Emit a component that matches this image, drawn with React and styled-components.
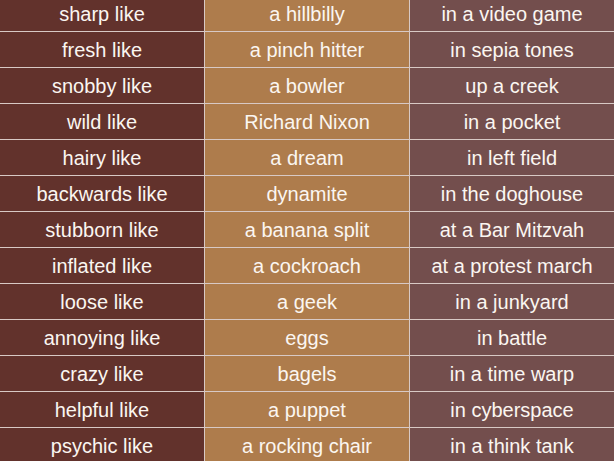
import React from 'react';
import styled, { createGlobalStyle } from 'styled-components';

const GlobalStyle = createGlobalStyle`
  html, body {
    margin: 0;
    padding: 0;
    overflow: hidden;
    background: #734e4d;
  }
`;

const Table = styled.div`
  display: grid;
  grid-template-columns: 204px 204px 204px;
  grid-auto-rows: 35px;
  gap: 1px;
  width: 614px;
  margin-top: -4px;
  background-color: #d8c9c5; /* grid lines */
  font-family: "Liberation Sans", Arial, sans-serif;
  font-size: 20px;
  color: #fbf6f1;
`;

const COLORS = ['#62322c', '#ae7c4c', '#734e4d'];

const Cell = styled.div`
  display: flex;
  align-items: center;
  justify-content: center;
  padding-top: 1px;
  background-color: ${(p) => COLORS[p.$col]};
  white-space: nowrap;
`;

const rows = [
  ['sharp like', 'a hillbilly', 'in a video game'],
  ['fresh like', 'a pinch hitter', 'in sepia tones'],
  ['snobby like', 'a bowler', 'up a creek'],
  ['wild like', 'Richard Nixon', 'in a pocket'],
  ['hairy like', 'a dream', 'in left field'],
  ['backwards like', 'dynamite', 'in the doghouse'],
  ['stubborn like', 'a banana split', 'at a Bar Mitzvah'],
  ['inflated like', 'a cockroach', 'at a protest march'],
  ['loose like', 'a geek', 'in a junkyard'],
  ['annoying like', 'eggs', 'in battle'],
  ['crazy like', 'bagels', 'in a time warp'],
  ['helpful like', 'a puppet', 'in cyberspace'],
  ['psychic like', 'a rocking chair', 'in a think tank'],
];

const App = () => {
  return (
    <>
      <GlobalStyle />
      <Table>
        {rows.map((row, i) =>
          row.map((text, j) => (
            <Cell key={i + '-' + j} $col={j}>
              {text}
            </Cell>
          ))
        )}
      </Table>
    </>
  );
};

export default App;
